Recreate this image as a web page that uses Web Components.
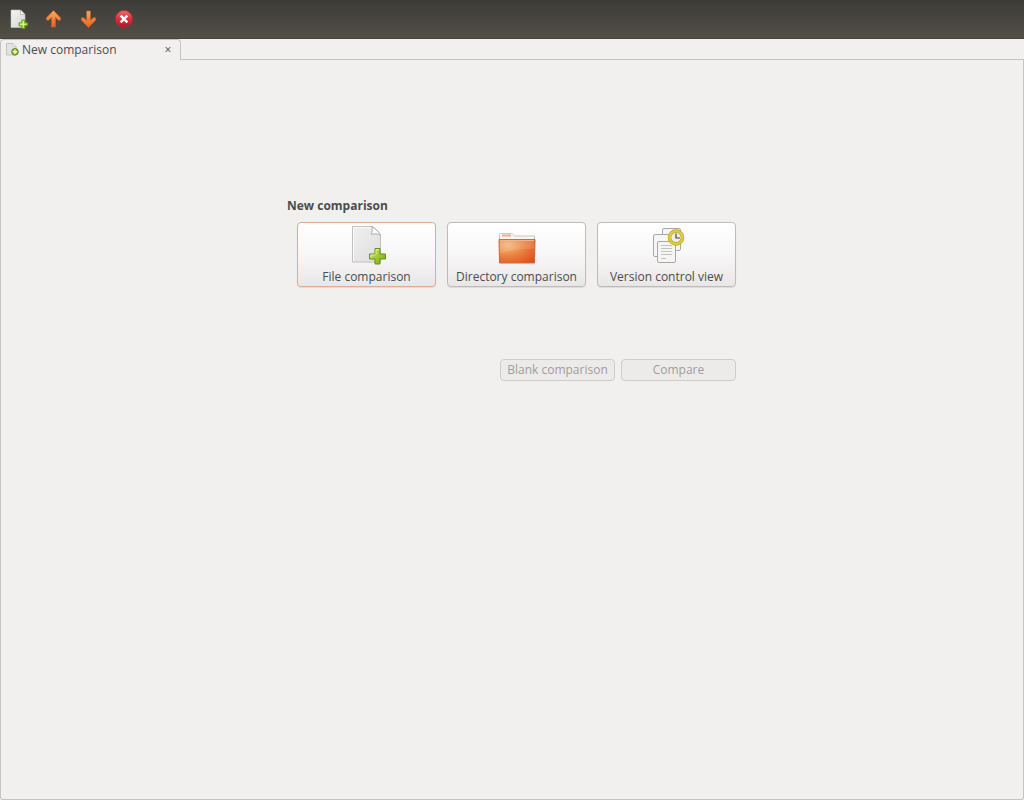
<!DOCTYPE html>
<html lang="en">
<head>
<meta charset="utf-8">
<title>New comparison</title>
<style>
html, body {
    height: 100%;
    margin: 0;
}
body {
    font: 12px/16px "Open Sans", "Noto Sans", sans-serif;
    color: #4c4c4c;
    background-color: #f1f0ee;
}
</style>
</head>
<body>
<compare-app></compare-app>

<script>
// drawings shared by the toolbar, the tab and the large buttons
const icons = {
    file: `<svg viewBox="0 0 40 40">
        <defs>
            <linearGradient id="p" x2="1" y2="1"><stop stop-color="#f0f0f0"/><stop offset="1" stop-color="#dedede"/></linearGradient>
            <linearGradient id="g" x2="1" y2="1"><stop stop-color="#d6ea5c"/><stop offset="1" stop-color="#74a80c"/></linearGradient>
        </defs>
        <path d="M5.500 1.500h20c3 2 6 5 8 8.500v27h-28z" fill="url(#p)" stroke="#c0c0c0"/>
        <path d="M6.500 36V2.500h18" fill="none" stroke="#fafafa"/>
        <path d="M24.500 1.500c1.500 2 .5 5 0 8 3-1 6-1 9 1-2-4-5-7-9-9z" fill="#fff" stroke="#b0b0b0"/>
        <path d="M28 23.500h5v5.500h5.500v5h-5.500v5h-5v-5h-5.500v-5h5.500z" fill="url(#g)" stroke="#648f18" stroke-linejoin="round"/>
        <path d="M29 29.500v-5h3M24 33v-3h4.500" fill="none" stroke="#eaf59b" opacity=".8"/>
    </svg>`,
    smallFile: `<svg viewBox="0 0 20 20">
        <defs>
            <linearGradient id="p" x2="1" y2="1"><stop stop-color="#f6f6f4"/><stop offset="1" stop-color="#d2d2d0"/></linearGradient>
            <linearGradient id="g" x2="1" y2="1"><stop stop-color="#d4f06a"/><stop offset="1" stop-color="#6fae12"/></linearGradient>
        </defs>
        <path d="M2 1h9.500L16 5.500V18.500H2z" fill="url(#p)" stroke="#c2c2bf" stroke-width=".6"/>
        <path d="M11.500 1v4.500H16z" fill="#fff" stroke="#aaa" stroke-width=".7"/>
        <path d="M12.800 11h3v2.800h2.800v3h-2.800v2.800h-3v-2.800H10v-3h2.800z" fill="url(#g)" stroke="#5f9a0c" stroke-width=".9" stroke-linejoin="round"/>
        <path d="M14.300 12.200v6.300M11.200 15.300h6.300" fill="none" stroke="#e4f89a" stroke-width="1"/>
    </svg>`,
    tabFile: `<svg viewBox="0 0 14 14">
        <path d="M1.500 .5h6.500l3 3v8.500h-9.500z" fill="#e3e3e1" stroke="#c2c2bf"/>
        <path d="M8 .5v3h3z" fill="#fff" stroke="#c4c4c4" stroke-width=".6"/>
        <circle cx="10" cy="8.800" r="3.400" fill="#86ad34" stroke="#647f30" stroke-width=".8"/>
        <path d="M10 6.600v4.400M7.800 8.800h4.400" stroke="#f0f8c0" stroke-width="1.400"/>
    </svg>`,
    up: `<svg viewBox="0 0 20 20">
        <defs><linearGradient id="o" x2="0" y2="1"><stop stop-color="#fba95e"/><stop offset="1" stop-color="#ea5f1c"/></linearGradient></defs>
        <path d="M9.500 1.500L16.500 8.700V11.200H14.200L11.400 8.500V18H7.600V8.500L4.800 11.200H2.500V8.700z" fill="url(#o)" stroke="#cf6126" stroke-width=".7" stroke-linejoin="round"/>
    </svg>`,
    down: `<svg viewBox="0 0 20 20">
        <defs><linearGradient id="o" x2="0" y2="1"><stop stop-color="#fba95e"/><stop offset="1" stop-color="#ea5f1c"/></linearGradient></defs>
        <path d="M9.500 18.500L16.500 11.300V8.800H14.200L11.400 11.500V2H7.600V11.500L4.800 8.800H2.500V11.300z" fill="url(#o)" stroke="#cf6126" stroke-width=".7" stroke-linejoin="round"/>
    </svg>`,
    stop: `<svg viewBox="0 0 20 20">
        <defs><linearGradient id="r" x2="0" y2="1"><stop stop-color="#ef6a6c"/><stop offset=".5" stop-color="#d7303c"/><stop offset="1" stop-color="#b81428"/></linearGradient></defs>
        <circle cx="10" cy="10" r="8.500" fill="url(#r)" stroke="#b72a36" stroke-width=".7"/>
        <path d="M6.700 6.700l6.600 6.600M13.300 6.700l-6.600 6.600" stroke="#fff" stroke-width="2.400"/>
    </svg>`,
    folder: `<svg viewBox="0 0 40 40">
        <defs>
            <radialGradient id="f" cx=".25" cy=".25" r=".95"><stop stop-color="#f3b878"/><stop offset=".5" stop-color="#e98040"/><stop offset="1" stop-color="#e24e1a"/></radialGradient>
        </defs>
        <path d="M2.500 36.500V9.500q0-1 1-1h11q1 0 1.500 1l1.500 1.500h20v25.500z" fill="#f7f5f3" stroke="#cbc6c2"/>
        <path d="M5 10.500h9" stroke="#e4b192" stroke-width="2"/>
        <path d="M2 14.500h36l-.5 23.500h-35z" fill="url(#f)" stroke="#cf6a3c"/>
        <path d="M3 15.500h34v8c-12 0-22 1-34 5z" fill="#fff" opacity=".13"/>
        <path d="M3 15.500h34" stroke="#f0b488"/>
    </svg>`,
    versions: `<svg viewBox="0 0 40 40">
        <g fill="#f5f5f4" stroke="#a8a8a5">
            <rect x="15.500" y="3.500" width="18" height="22" rx="1.500"/>
            <rect x="6.500" y="9.500" width="18" height="22" rx="1.500"/>
            <rect x="10.500" y="16.500" width="18" height="21" rx="1.500"/>
        </g>
        <path d="M14 20.500h11M14 23.500h11M14 26.500h11M14 29.500h11M14 33.500h5" stroke="#c2c2c0"/>
        <circle cx="29" cy="12.500" r="6.500" fill="#eeeee8" stroke="#b8a520" stroke-width="3.500"/>
        <circle cx="29" cy="12.500" r="6.500" fill="none" stroke="#dfcb48" stroke-width="2.200"/>
        <path d="M29 8.500v4.500h4" fill="none" stroke="#444" stroke-width="1.200"/>
    </svg>`,
};

class ToolButton extends HTMLElement {
    constructor() {
        super();
        this.attachShadow({ mode: "open" });
    }
    connectedCallback() {
        this.shadowRoot.innerHTML = `
<style>
:host {
    display: block;
}
button {
    display: grid;
    place-items: center;
    width: 35px;
    height: 36px;
    padding: 0;
    border: 0;
    background: none;
}
svg {
    display: block;
    width: 20px;
    height: 20px;
}
</style>
<button type="button" aria-label="${this.getAttribute("label")}">${icons[this.getAttribute("icon")]}</button>`;
    }
}
customElements.define("tool-button", ToolButton);

class ToolBar extends HTMLElement {
    constructor() {
        super();
        this.attachShadow({ mode: "open" }).innerHTML = `
<style>
:host {
    display: flex;
    align-items: center;
    box-sizing: border-box;
    height: 39px;
    padding: 0 1px;
    background: linear-gradient(#3c3b37, #524f48);
    border-bottom: 1px solid #45433d;
}
</style>
<slot></slot>`;
    }
}
customElements.define("tool-bar", ToolBar);

// tab strip and the framed page below it
class NoteBook extends HTMLElement {
    constructor() {
        super();
        this.attachShadow({ mode: "open" }).innerHTML = `
<style>
:host {
    display: flex;
    flex-direction: column;
}
.strip {
    display: flex;
    height: 21px;
}
.tab {
    display: flex;
    align-items: center;
    box-sizing: border-box;
    width: 181px;
    padding: 0 8px 0 4px;
    border: 1px solid #c6c4c1;
    border-bottom: 0;
    border-radius: 4px 4px 0 0;
}
.tab svg {
    width: 14px;
    height: 14px;
    margin-right: 3px;
}
.title {
    flex: 1;
}
.close {
    width: 8px;
    padding: 0;
    border: 0;
    background: none;
    font: inherit;
    color: inherit;
}
.rest {
    flex: 1;
    box-sizing: border-box;
    border-bottom: 1px solid #c6c4c1;
}
.page {
    flex: 1;
    border: 1px solid #c6c4c1;
    border-top: 0;
    border-radius: 0 0 3px 3px;
}
</style>
<div class="strip">
    <div class="tab">${icons.tabFile}<span class="title"><slot name="title"></slot></span><button class="close" type="button" aria-label="Close tab">×</button></div>
    <div class="rest"></div>
</div>
<div class="page"><slot></slot></div>`;
    }
}
customElements.define("note-book", NoteBook);

class TypeButton extends HTMLElement {
    constructor() {
        super();
        this.attachShadow({ mode: "open" });
    }
    connectedCallback() {
        this.shadowRoot.innerHTML = `
<style>
:host {
    display: block;
}
button {
    display: flex;
    flex-direction: column;
    align-items: center;
    gap: 4px;
    box-sizing: border-box;
    width: 100%;
    padding: 2px 0 1px;
    border: 1px solid #bebcba;
    border-radius: 4px;
    background: linear-gradient(#fff, #f8f7f7 50%, #e9e7e6);
    box-shadow: 0 1px 1px #dddbd9;
    font: inherit;
    color: inherit;
    white-space: nowrap;
}
:host([focused]) button {
    border-color: #dfaa96;
}
svg {
    width: 40px;
    height: 40px;
}
</style>
<button type="button">${icons[this.getAttribute("icon")]}<slot></slot></button>`;
    }
}
customElements.define("type-button", TypeButton);

class ActionButton extends HTMLElement {
    constructor() {
        super();
        this.attachShadow({ mode: "open" }).innerHTML = `
<style>
:host {
    display: block;
}
button {
    box-sizing: border-box;
    width: 100%;
    padding: 2px 0;
    border: 1px solid #cfcdcb;
    border-radius: 4px;
    background-color: #ecebe9;
    font: inherit;
    color: #a09e9c;
    white-space: nowrap;
}
</style>
<button type="button" disabled><slot></slot></button>`;
    }
}
customElements.define("action-button", ActionButton);

class NewComparison extends HTMLElement {
    constructor() {
        super();
        this.attachShadow({ mode: "open" }).innerHTML = `
<style>
:host {
    display: block;
    box-sizing: border-box;
    max-width: 450px;
    margin: 0 auto;
    padding: 138px 1px 0 0;
}
h1 {
    margin: 0 0 8px;
    font-size: 12px;
    line-height: 16px;
}
.types {
    display: grid;
    grid-template-columns: repeat(3, 1fr);
    gap: 11px;
    padding-left: 10px;
}
.actions {
    display: grid;
    grid-template-columns: 115px 115px;
    justify-content: end;
    gap: 6px;
    margin-top: 72px;
}
</style>
<h1>New comparison</h1>
<div class="types">
    <type-button icon="file" focused>File comparison</type-button>
    <type-button icon="folder">Directory comparison</type-button>
    <type-button icon="versions">Version control view</type-button>
</div>
<div class="actions">
    <action-button>Blank comparison</action-button>
    <action-button>Compare</action-button>
</div>`;
    }
}
customElements.define("new-comparison", NewComparison);

class CompareApp extends HTMLElement {
    constructor() {
        super();
        this.attachShadow({ mode: "open" }).innerHTML = `
<style>
:host {
    display: flex;
    flex-direction: column;
    min-height: 100%;
}
note-book {
    flex: 1;
}
</style>
<tool-bar>
    <tool-button icon="smallFile" label="New"></tool-button>
    <tool-button icon="up" label="Previous change"></tool-button>
    <tool-button icon="down" label="Next change"></tool-button>
    <tool-button icon="stop" label="Stop"></tool-button>
</tool-bar>
<note-book>
    <span slot="title">New comparison</span>
    <new-comparison></new-comparison>
</note-book>`;
    }
}
customElements.define("compare-app", CompareApp);
</script>
</body>
</html>
